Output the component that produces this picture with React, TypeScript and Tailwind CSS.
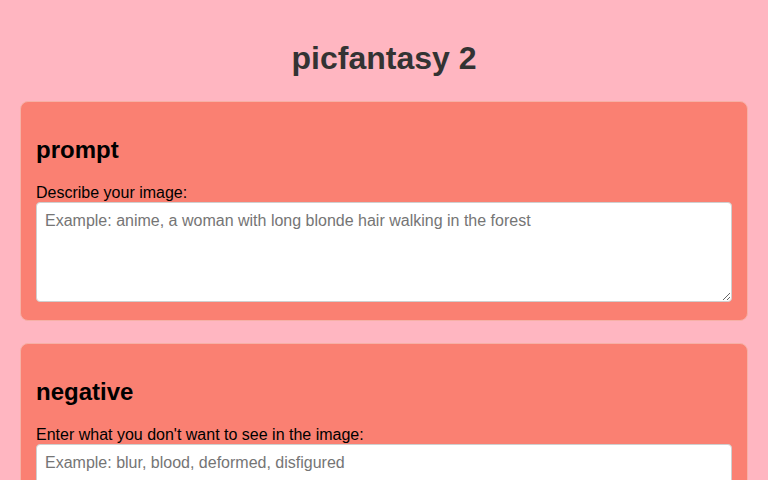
import type { ReactNode } from "react";

function Section({
  title,
  label,
  placeholder,
}: {
  title: string;
  label: string;
  placeholder: string;
}) {
  return (
    <section className="mb-[22px] rounded-lg border border-[#f6b0a6] bg-[#fa8072] p-[15px]">
      <h2 className="mt-[19px] mb-[20px] text-[24px] font-bold leading-[27.6px] text-black">
        {title}
      </h2>
      <Field label={label}>
        <textarea
          placeholder={placeholder}
          className="block h-[100px] w-full resize-y rounded border border-[#cfcfcf] bg-white px-2 pt-[9px] pb-2 text-base leading-[18.4px] text-black placeholder:text-[#757575] focus:outline-none"
        />
      </Field>
    </section>
  );
}

function Field({ label, children }: { label: string; children: ReactNode }) {
  return (
    <div className="pb-[3px]">
      <label className="block text-base leading-[18.4px] text-black">{label}</label>
      {children}
    </div>
  );
}

export default function App() {
  return (
    <div className="min-h-screen bg-[#ffb6c1] p-5 font-['Liberation_Sans',Arial,sans-serif]">
      <h1 className="mt-[20px] mb-[24px] text-center text-[32px] font-bold leading-[37px] text-[#333333]">
        picfantasy 2
      </h1>
      <Section
        title="prompt"
        label="Describe your image:"
        placeholder="Example: anime, a woman with long blonde hair walking in the forest"
      />
      <Section
        title="negative"
        label="Enter what you don't want to see in the image:"
        placeholder="Example: blur, blood, deformed, disfigured"
      />
    </div>
  );
}
